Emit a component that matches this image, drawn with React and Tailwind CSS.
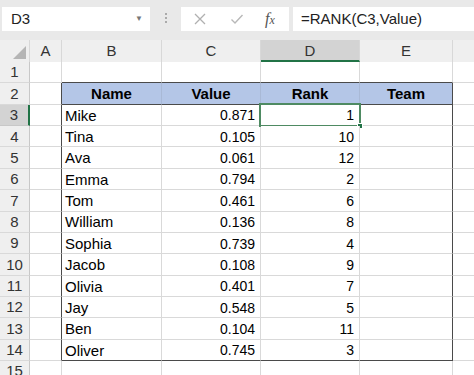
import React from 'react';

const rows = [
  ['Mike', '0.871', '1'],
  ['Tina', '0.105', '10'],
  ['Ava', '0.061', '12'],
  ['Emma', '0.794', '2'],
  ['Tom', '0.461', '6'],
  ['William', '0.136', '8'],
  ['Sophia', '0.739', '4'],
  ['Jacob', '0.108', '9'],
  ['Olivia', '0.401', '7'],
  ['Jay', '0.548', '5'],
  ['Ben', '0.104', '11'],
  ['Oliver', '0.745', '3'],
];

const font = { fontFamily: '"Liberation Sans", Arial, sans-serif' };

function Toolbar() {
  return (
    <div className="flex h-[40px] items-start bg-[#e9e9e9] pt-[7px]">
      <div className="ml-[2px] flex h-[24px] w-[148px] items-center justify-between bg-white pl-[9px] pr-[7px] text-[15px] text-[#222]">
        <span>D3</span>
        <span className="text-[8px] text-[#777]">▼</span>
      </div>
      <div className="flex w-[31px] flex-col items-center justify-center gap-[2px] pt-[6px]">
        <span className="h-[2px] w-[2px] bg-[#aaa]" />
        <span className="h-[2px] w-[2px] bg-[#aaa]" />
        <span className="h-[2px] w-[2px] bg-[#aaa]" />
      </div>
      <div className="flex h-[24px] w-[108px] items-center bg-white">
        <svg width="14" height="14" viewBox="0 0 14 14" className="ml-[12px]">
          <path d="M2 2 L12 12 M12 2 L2 12" stroke="#b0b0b0" strokeWidth="1.3" />
        </svg>
        <svg width="14" height="14" viewBox="0 0 14 14" className="ml-[23px]">
          <path d="M1.5 7.5 L5 11 L12.5 3" stroke="#b8b8b8" strokeWidth="1.4" fill="none" />
        </svg>
        <span className="ml-[21px] text-[16px] italic text-[#555]" style={{ fontFamily: '"Liberation Serif", serif' }}>
          f<span className="text-[12px]">x</span>
        </span>
      </div>
      <div className="ml-[4px] flex h-[24px] flex-1 items-center bg-white pl-[8px] text-[15px] text-[#222]">
        =RANK(C3,Value)
      </div>
    </div>
  );
}

function ColHeader() {
  const cols = [
    ['A', 'w-[32px]'],
    ['B', 'w-[100px]'],
    ['C', 'w-[99px]'],
    ['D', 'w-[99px]'],
    ['E', 'w-[93px]'],
  ];
  return (
    <div className="flex h-[22px] bg-[#efefef] text-[15px] text-[#333]">
      <div className="relative w-[30px] border-r border-[#d8d8d8]">
        <svg width="13" height="13" viewBox="0 0 13 13" className="absolute bottom-[3px] right-[3px]">
          <path d="M13 0 L13 13 L0 13 Z" fill="#b5b5b5" />
        </svg>
      </div>
      {cols.map(([c, w]) => (
        <div
          key={c}
          className={`${w} flex items-center justify-center border-r border-[#d8d8d8] ${
            c === 'D' ? 'border-b-2 border-b-[#217346] bg-[#d3d3d3] pt-[2px]' : ''
          }`}
        >
          {c}
        </div>
      ))}
      <div className="flex-1" />
    </div>
  );
}

function Row({ n, cells, header }) {
  const inTable = n >= 2 && n <= 14;
  const sel = n === 3;
  const bottomDark = n === 1 || n === 2 || n === 14;
  const cellBase = 'flex items-center border-r border-b pt-[2px]';
  const bColor = bottomDark ? 'border-b-[#4a4a4a]' : 'border-b-[#d9d9d9]';
  const bg = header ? 'bg-[#b4c6e7]' : 'bg-white';
  return (
    <div className="flex h-[21.36px]">
      <div
        className={`flex w-[30px] items-center justify-center border-b border-r pt-[1px] text-[15px] text-[#333] ${
          sel ? 'border-r-2 border-r-[#217346] border-b-[#c8c8c8] bg-[#d3d3d3]' : 'border-b-[#d9d9d9] border-r-[#c8c8c8] bg-[#efefef]'
        }`}
      >
        {n}
      </div>
      <div className={`w-[32px] ${cellBase} border-b-[#d9d9d9] ${inTable ? 'border-r-[#4a4a4a]' : 'border-r-[#d9d9d9]'}`} />
      <div
        className={`w-[100px] ${cellBase} ${bColor} ${inTable ? bg : ''} text-[15px] ${
          header ? 'justify-center border-r-[#a9b9d6] font-bold' : 'border-r-[#d9d9d9] pl-[3px]'
        }`}
      >
        {cells[0]}
      </div>
      <div
        className={`w-[99px] ${cellBase} ${bColor} ${inTable ? bg : ''} ${
          header ? 'justify-center border-r-[#a9b9d6] text-[15px] font-bold' : 'justify-end border-r-[#d9d9d9] pr-[5px] text-[14px]'
        }`}
      >
        {cells[1]}
      </div>
      <div
        className={`relative w-[99px] ${cellBase} ${bColor} ${inTable ? bg : ''} ${
          header ? 'justify-center border-r-[#a9b9d6] text-[15px] font-bold' : 'justify-end border-r-[#d9d9d9] pr-[5px] text-[14px]'
        }`}
      >
        {cells[2]}
        {sel && (
          <>
            <div className="pointer-events-none absolute inset-[-2px] border-2 border-[#4e8a62]" />
            <div className="absolute bottom-[-4px] right-[-4px] h-[6px] w-[6px] border border-white bg-[#217346]" />
          </>
        )}
      </div>
      <div
        className={`w-[93px] ${cellBase} ${bColor} ${inTable ? bg : ''} ${
          inTable ? 'border-r-[#4a4a4a]' : 'border-r-[#d9d9d9]'
        } ${header ? 'justify-center text-[15px] font-bold' : ''}`}
      >
        {cells[3]}
      </div>
      <div className="flex-1 border-b border-b-[#d9d9d9] bg-white" />
    </div>
  );
}

export default function App() {
  return (
    <div className="h-[375px] w-[474px] overflow-hidden bg-white text-[14px] text-black" style={font}>
      <Toolbar />
      <ColHeader />
      <Row n={1} cells={['', '', '', '']} />
      <Row n={2} cells={['Name', 'Value', 'Rank', 'Team']} header />
      {rows.map((r, i) => (
        <Row key={i} n={i + 3} cells={[r[0], r[1], r[2], '']} />
      ))}
      <Row n={15} cells={['', '', '', '']} />
    </div>
  );
}
